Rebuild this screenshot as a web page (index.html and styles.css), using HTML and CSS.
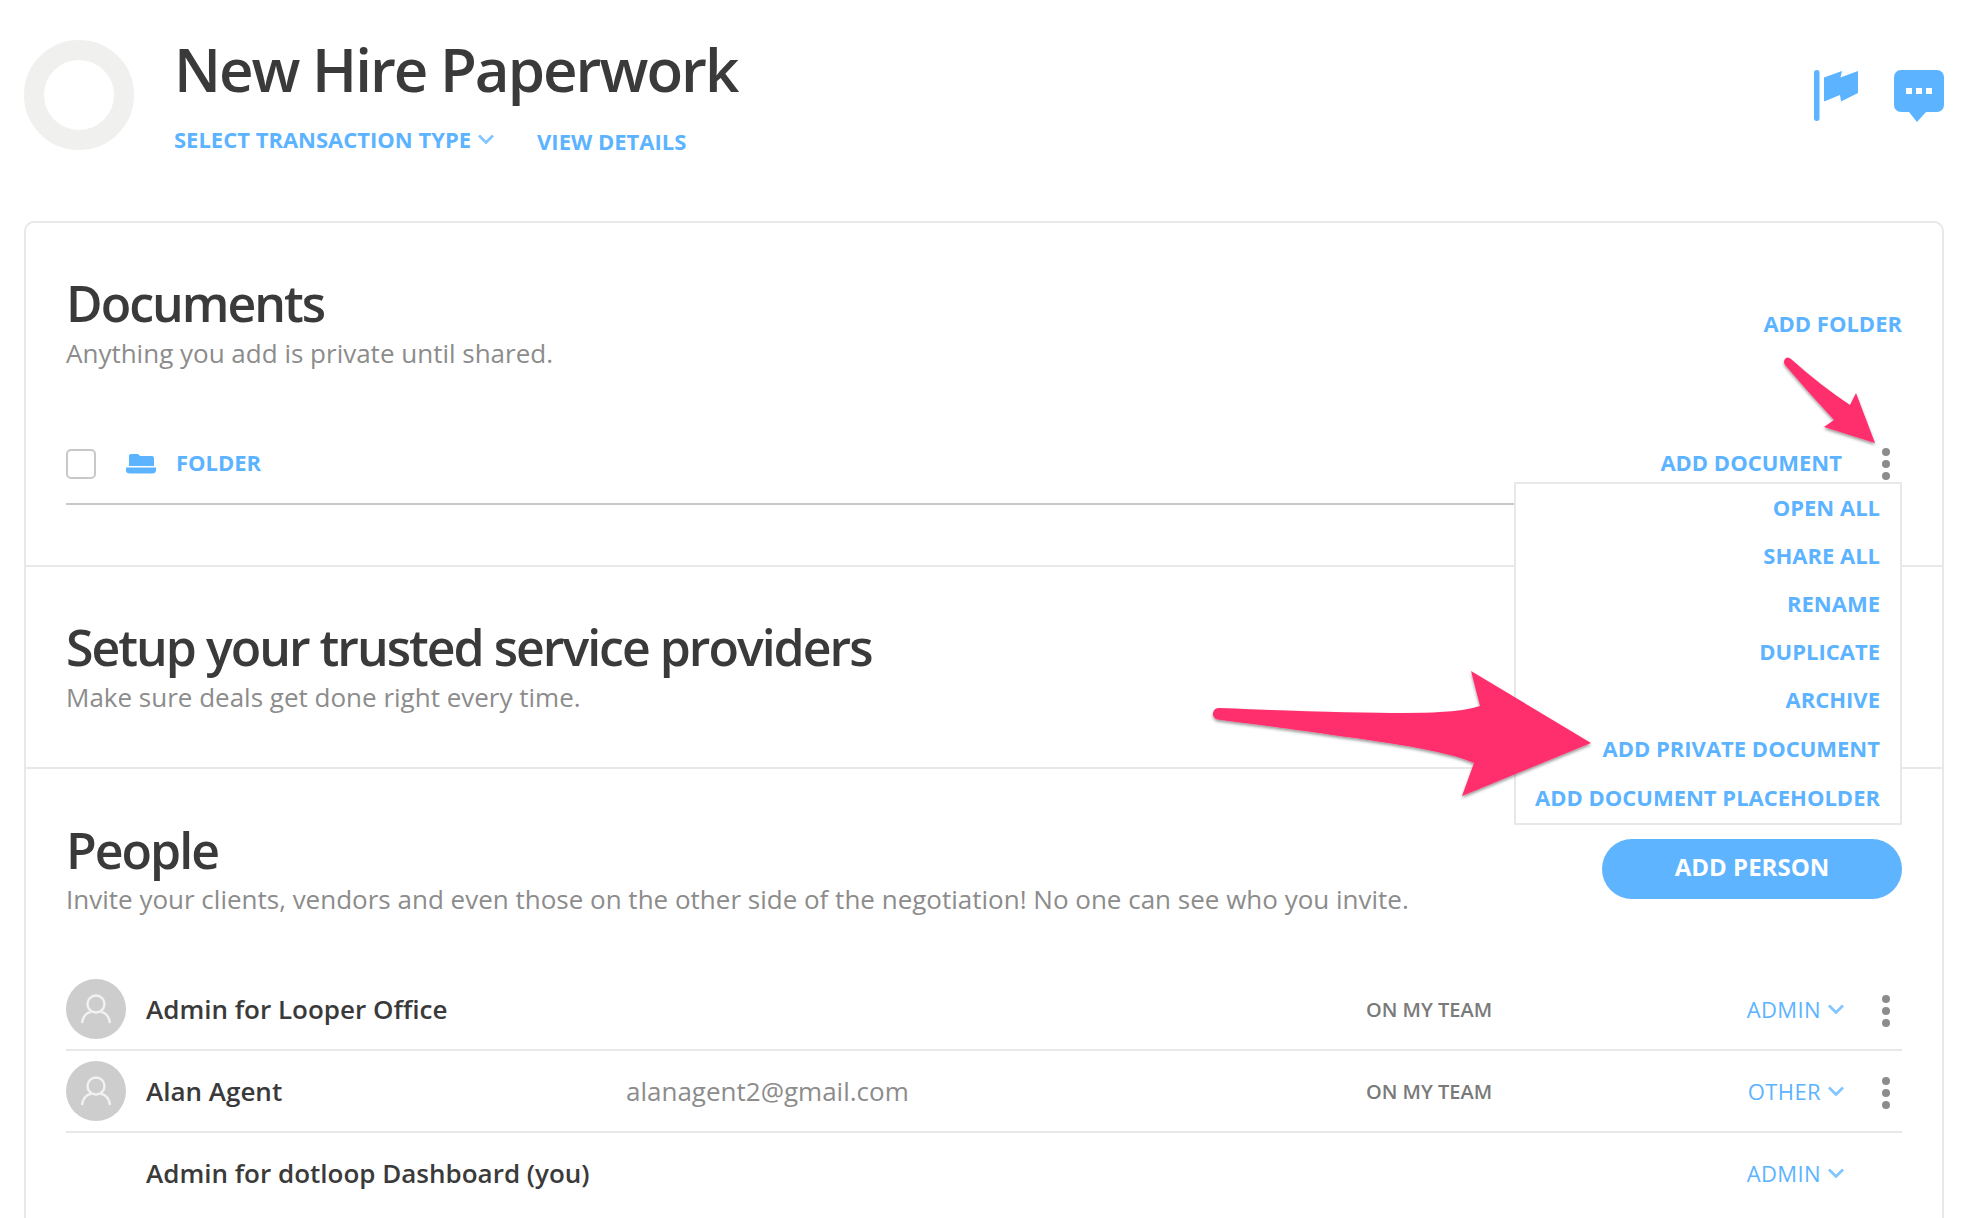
FILE: index.html
```html
<!DOCTYPE html>
<html lang="en">
<head>
<meta charset="utf-8">
<title>New Hire Paperwork</title>
<link rel="stylesheet" href="styles.css">
</head>
<body>
<header class="top">
  <div class="ring"></div>
  <div class="top-main">
    <h1 class="title">New Hire Paperwork</h1>
    <div class="top-links">
      <a class="link nav-type">SELECT TRANSACTION TYPE<svg class="chev" viewBox="0 0 16 10"><path d="M1 1.5 8 8.5 15 1.5"/></svg></a>
      <a class="link nav-view">VIEW DETAILS</a>
    </div>
  </div>
  <div class="top-icons">
    <svg class="flag" viewBox="0 0 46 52"><rect x="0" y="0" width="5.5" height="51" rx="2.7"/><path d="M10 7.5 28 1 26.500 7.500 44 1V23L27 31.500 26 25 10 31.500Z"/></svg>
    <svg class="chat" viewBox="0 0 50 52"><path d="M7 0H43A7 7 0 0 1 50 7V35A7 7 0 0 1 43 42H32L23 52 15 42H7A7 7 0 0 1 0 35V7A7 7 0 0 1 7 0Z"/><rect class="chat-dot" x="12" y="18" width="6" height="6"/><rect class="chat-dot" x="22" y="18" width="6" height="6"/><rect class="chat-dot" x="32" y="18" width="6" height="6"/></svg>
  </div>
</header>

<main class="card">
  <section class="sec sec-docs">
    <div class="head">
      <div>
        <h2 class="h">Documents</h2>
        <p class="sub">Anything you add is private until shared.</p>
      </div>
      <a class="link add-folder">ADD FOLDER</a>
    </div>
    <div class="folder-row">
      <span class="check"></span>
      <svg class="folder" viewBox="0 0 30 21"><path d="M3 5V2.500Q3 1 5 1H11Q13 1 14 3H26Q28 3 28 5V13H3Z"/><path d="M0 14.500H30V17Q30 20.500 26 20.500H4Q0 20.500 0 17Z"/></svg>
      <a class="link folder-name">FOLDER</a>
      <a class="link add-doc">ADD DOCUMENT</a>
      <span class="kebab kebab-folder"><i></i><i></i><i></i></span>
      <nav class="menu">
        <a class="link menu-item">OPEN ALL</a>
        <a class="link menu-item">SHARE ALL</a>
        <a class="link menu-item">RENAME</a>
        <a class="link menu-item">DUPLICATE</a>
        <a class="link menu-item">ARCHIVE</a>
        <a class="link menu-item menu-low">ADD PRIVATE DOCUMENT</a>
        <a class="link menu-item menu-low">ADD DOCUMENT PLACEHOLDER</a>
      </nav>
    </div>
  </section>

  <section class="sec sec-providers">
    <h2 class="h">Setup your trusted service providers</h2>
    <p class="sub">Make sure deals get done right every time.</p>
  </section>

  <section class="sec sec-people">
    <div class="head head-people">
      <div>
        <h2 class="h">People</h2>
        <p class="sub">Invite your clients, vendors and even those on the other side of the negotiation! No one can see who you invite.</p>
      </div>
      <button class="add-person">ADD PERSON</button>
    </div>
    <div class="rows">
      <div class="row">
        <span class="avatar"><svg viewBox="0 0 60 60"><circle cx="30" cy="25" r="8.500"/><path d="M16 44C17 36 22 33 25 33M44 44C43 36 38 33 35 33"/></svg></span>
        <span class="name">Admin for Looper Office</span>
        <span class="email"></span>
        <span class="team">ON MY TEAM</span>
        <a class="role">ADMIN<svg class="chev" viewBox="0 0 16 10"><path d="M1 1.5 8 8.5 15 1.5"/></svg></a>
        <span class="kebab-cell"><span class="kebab"><i></i><i></i><i></i></span></span>
      </div>
      <div class="row">
        <span class="avatar"><svg viewBox="0 0 60 60"><circle cx="30" cy="25" r="8.500"/><path d="M16 44C17 36 22 33 25 33M44 44C43 36 38 33 35 33"/></svg></span>
        <span class="name">Alan Agent</span>
        <span class="email">alanagent2@gmail.com</span>
        <span class="team">ON MY TEAM</span>
        <a class="role">OTHER<svg class="chev" viewBox="0 0 16 10"><path d="M1 1.5 8 8.5 15 1.5"/></svg></a>
        <span class="kebab-cell"><span class="kebab"><i></i><i></i><i></i></span></span>
      </div>
      <div class="row row-last">
        <span class="avatar-empty"></span>
        <span class="name">Admin for dotloop Dashboard (you)</span>
        <span class="email"></span>
        <span class="team"></span>
        <a class="role">ADMIN<svg class="chev" viewBox="0 0 16 10"><path d="M1 1.5 8 8.5 15 1.5"/></svg></a>
        <span class="kebab-cell"></span>
      </div>
    </div>
  </section>
</main>

<svg class="arrows" viewBox="0 0 1976 1218">
  <defs>
    <filter id="sh" x="-10%" y="-10%" width="120%" height="130%">
      <feDropShadow dx="0" dy="2" stdDeviation="1.500" flood-color="#000" flood-opacity="0.4"/>
    </filter>
  </defs>
  <path class="arrow" d="M1785 359Q1787 356 1791 359Q1820 385 1850 405L1856 393L1875 443L1824 427L1834 420Q1808 392 1785 365Q1783 362 1785 359Z"/>
  <path class="arrow" d="M1219 708Q1400 715 1440 712Q1465 711 1480 706L1471 671L1591 743L1462 796L1474 763C1449 752 1400 744 1332 735C1290 729 1260 725 1221 720Q1212 719 1213 713Q1214 708 1219 708Z"/>
</svg>
</body>
</html>
```

FILE: styles.css
```css
* { box-sizing: border-box; }
html, body { margin: 0; height: 1218px; overflow: hidden; background: #fff; }
body { position: relative; font-family: "Open Sans", "Noto Sans", sans-serif; color: #3a3a3a; }
h1, h2, p { margin: 0; }
a { display: block; }

.link { color: #5cb3ff; font-weight: 700; font-size: 22px; line-height: 30px; white-space: nowrap; }
.chev { fill: none; stroke: #84c6ff; stroke-width: 2.8; width: 16px; height: 10px; }

.top { display: flex; height: 221px; padding: 40px 32px 0 24px; }
.ring { width: 110px; height: 110px; border: 20px solid #f0f0ee; border-radius: 50%; flex: none; }
.top-main { margin-left: 40px; flex: 1; margin-top: -11px; }
.title { font-size: 60px; line-height: 80px; font-weight: 600; letter-spacing: -2px; color: #3a3a3a; }
.top-links { display: flex; align-items: flex-start; margin-top: 15px; }
.nav-type { display: flex; align-items: center; gap: 7px; }
.nav-view { margin-left: 43px; margin-top: 2px; }
.top-icons { display: flex; gap: 34px; margin-top: 30px; align-items: flex-start; }
.flag { width: 46px; height: 52px; fill: #5cb3ff; }
.chat { width: 50px; height: 52px; fill: #5cb3ff; }
.chat-dot { fill: #fff; }

.card { width: 1920px; height: 1100px; margin-left: 24px; border: 2px solid #e8e8e8; border-radius: 10px; background: #fff; }
.sec { padding-left: 40px; padding-right: 40px; }
.sec-docs { padding-top: 50px; padding-bottom: 60px; }
.sec-providers { border-top: 2px solid #e8e8e8; padding-top: 50px; height: 202px; }
.sec-people { border-top: 2px solid #e8e8e8; padding-top: 51px; }
.head { display: flex; justify-content: space-between; align-items: flex-end; }
.head-people { align-items: center; }
.h { font-size: 50px; line-height: 60px; font-weight: 600; letter-spacing: -2px; color: #3a3a3a; }
.sub { font-size: 26px; line-height: 30px; margin-top: 5px; color: #8c8c8c; }
.sec-people .sub { margin-top: 4px; }
.add-folder { margin-bottom: 30px; }

.folder-row { position: relative; display: flex; align-items: center; height: 82px; margin-top: 55px; border-bottom: 2px solid #c8c8c8; }
.check { width: 30px; height: 30px; border: 2px solid #c8c8c8; border-radius: 5px; flex: none; margin-top: 1px; }
.folder { width: 30px; height: 21px; fill: #5cb3ff; margin-left: 30px; flex: none; }
.folder-name { margin-left: 20px; flex: 1; margin-bottom: 2px; }
.add-doc { margin-right: 40px; margin-bottom: 2px; }
.kebab { display: flex; flex-direction: column; gap: 4px; width: 8px; }
.kebab i { display: block; width: 8px; height: 8px; border-radius: 50%; background: #8c8c8c; }
.kebab-folder { margin-right: 12px; margin-top: 2px; }
.menu { position: absolute; right: 0; top: 59px; width: 388px; height: 343px; padding: 8px 20px 0 0; background: #fff; border: 2px solid #e8e8e8; display: flex; flex-direction: column; align-items: flex-end; gap: 18px; z-index: 2; }
.menu-low { margin-top: 1px; }

.add-person { width: 300px; height: 60px; margin-top: 3px; border: 0; border-radius: 30px; background: #5eb4ff; color: #fff; font: 700 24px/56px "Open Sans", sans-serif; padding: 0 0 3px; }

.rows { margin-top: 55px; }
.row { display: grid; grid-template-columns: 80px 480px 740px 160px 1fr 58px; align-items: center; height: 82px; border-bottom: 2px solid #e8e8e8; }
.row-last { border-bottom-color: transparent; }
.avatar { width: 60px; height: 60px; border-radius: 50%; background: #cdcdcd; display: block; }
.avatar svg { display: block; width: 60px; height: 60px; fill: none; stroke: #f2f2f2; stroke-width: 2.4; }
.avatar-empty { display: block; }
.name { font-size: 26px; font-weight: 600; color: #3a3a3a; white-space: nowrap; }
.email { font-size: 26px; color: #8c8c8c; white-space: nowrap; }
.team { font-size: 20px; font-weight: 600; color: #7a7a7a; white-space: nowrap; }
.role { display: flex; align-items: center; justify-content: flex-end; gap: 7px; color: #5cb3ff; font-size: 22px; font-weight: 400; letter-spacing: 0.4px; }
.kebab-cell { display: flex; padding: 3px 0 0 38px; }

.arrows { position: absolute; left: 0; top: 0; width: 1976px; height: 1218px; z-index: 5; pointer-events: none; }
.arrow { fill: #ff2f6c; filter: url(#sh); }
```
